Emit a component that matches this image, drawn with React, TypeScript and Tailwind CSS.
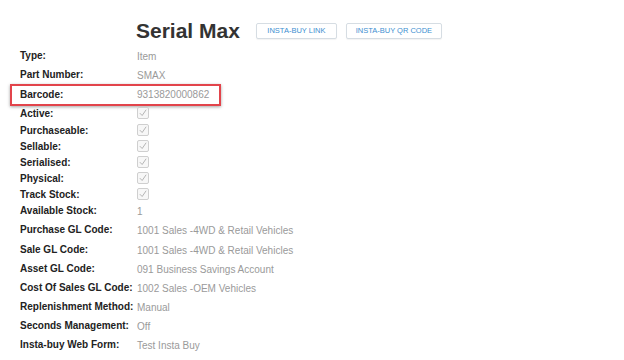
/**
 * Product detail sheet for "Serial Max".
 */

type Row = { label: string; value?: string; check?: boolean; h: string; highlight?: boolean };

const rows: Row[] = [
  { label: 'Type:', value: 'Item', h: 'h-[19px]' },
  { label: 'Part Number:', value: 'SMAX', h: 'h-[19px]' },
  { label: 'Barcode:', value: '9313820000862', h: 'h-[20px]', highlight: true },
  { label: 'Active:', check: true, h: 'h-[18px]' },
  { label: 'Purchaseable:', check: true, h: 'h-[16px]' },
  { label: 'Sellable:', check: true, h: 'h-[16px]' },
  { label: 'Serialised:', check: true, h: 'h-[16px]' },
  { label: 'Physical:', check: true, h: 'h-[16px]' },
  { label: 'Track Stock:', check: true, h: 'h-[16px]' },
  { label: 'Available Stock:', value: '1', h: 'h-[17px]' },
  { label: 'Purchase GL Code:', value: '1001 Sales -4WD & Retail Vehicles', h: 'h-[21px]' },
  { label: 'Sale GL Code:', value: '1001 Sales -4WD & Retail Vehicles', h: 'h-[19px]' },
  { label: 'Asset GL Code:', value: '091 Business Savings Account', h: 'h-[19px]' },
  { label: 'Cost Of Sales GL Code:', value: '1002 Sales -OEM Vehicles', h: 'h-[19px]' },
  { label: 'Replenishment Method:', value: 'Manual', h: 'h-[19px]' },
  { label: 'Seconds Management:', value: 'Off', h: 'h-[19px]' },
  { label: 'Insta-buy Web Form:', value: 'Test Insta Buy', h: 'h-[19px]' },
];

function CheckBox() {
  return (
    <span className="flex h-[12px] w-[12px] items-center justify-center rounded-[2px] border border-[#cfcfcf] bg-[#f7f7f7]">
      <svg viewBox="0 0 12 12" className="h-[10px] w-[10px]" fill="none">
        <path d="M2.5 6.5 L5 9 L9.5 2.5" stroke="#b5b5b5" strokeWidth="1.2" strokeLinecap="round" strokeLinejoin="round" />
      </svg>
    </span>
  );
}

export default function App() {
  return (
    <div className="h-[360px] w-[624px] overflow-hidden bg-white pl-[20px] font-['Liberation_Sans',Arial,sans-serif]">
      {/* Header */}
      <div className="flex h-[46px] items-start pl-[116px] pt-[20px]">
        <h1 className="text-[21px] leading-[22px] font-bold text-[#333]">Serial Max</h1>
        <div className="ml-[16px] mt-[3px] flex gap-[9px]">
          <button className="h-[16px] w-[81px] rounded-[2px] border border-[#d6dde3] bg-white text-[7.5px] leading-none text-[#3d8fd1] shadow-[0_1px_1px_rgba(0,0,0,0.05)]">
            INSTA-BUY LINK
          </button>
          <button className="h-[16px] w-[96px] rounded-[2px] border border-[#d6dde3] bg-white text-[7.5px] leading-none text-[#3d8fd1] shadow-[0_1px_1px_rgba(0,0,0,0.05)]">
            INSTA-BUY QR CODE
          </button>
        </div>
      </div>

      {/* Detail rows */}
      <div className="flex flex-col">
        {rows.map((r) => (
          <div key={r.label} className={`relative flex items-center ${r.h}`}>
            <span className="w-[117px] shrink-0 whitespace-nowrap text-[10px] font-bold text-[#222]">{r.label}</span>
            {r.check ? (
              <CheckBox />
            ) : (
              <span className="mt-[1px] whitespace-nowrap text-[10px] text-[#9a9a9a]">{r.value}</span>
            )}
            {r.highlight && (
              <span className="pointer-events-none absolute left-[-10px] top-0 h-[22px] w-[211px] border-2 border-[#e2444b] shadow-[0_1px_3px_rgba(0,0,0,0.35)]" />
            )}
          </div>
        ))}
      </div>
    </div>
  );
}
